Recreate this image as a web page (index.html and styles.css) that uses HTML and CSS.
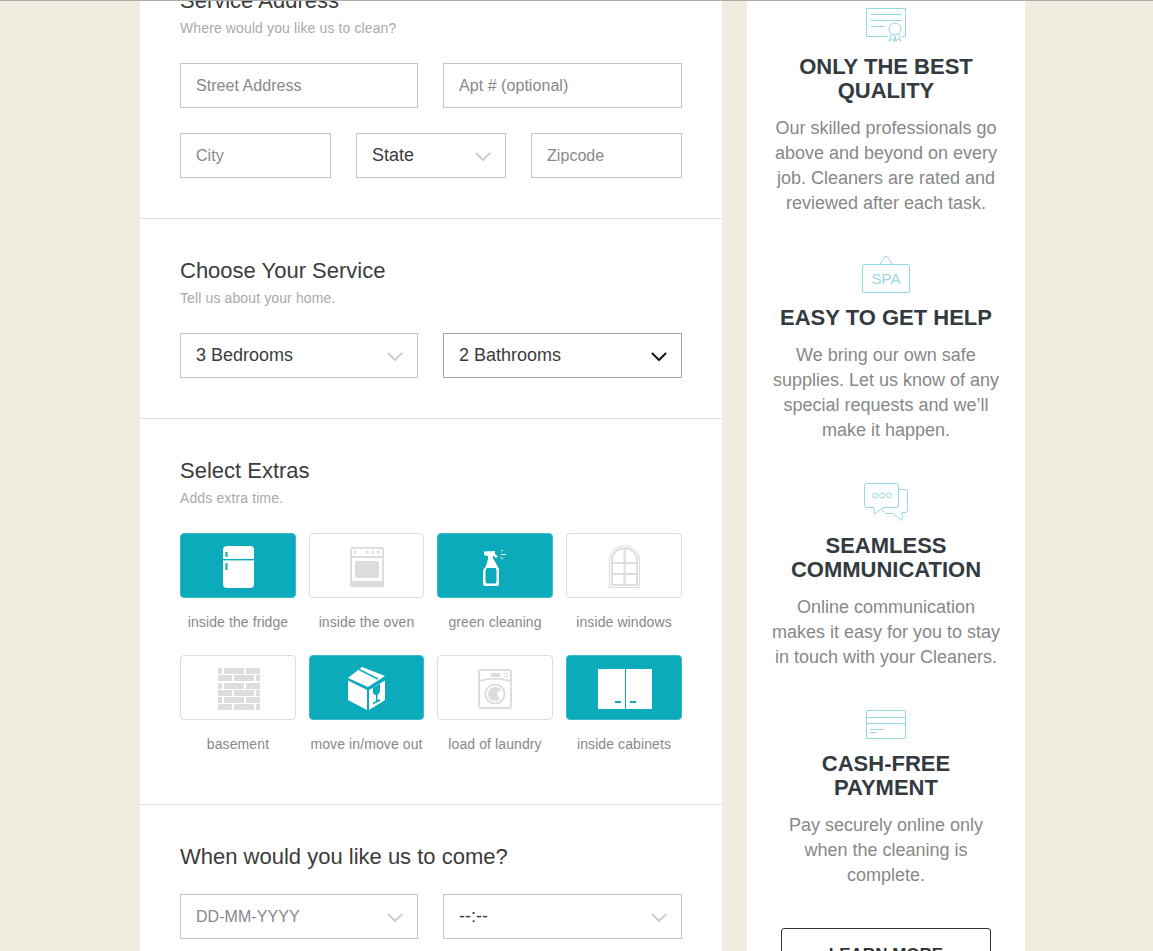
FILE: index.html
```html
<!DOCTYPE html>
<html lang="en">
<head>
    <meta charset="UTF-8">
    <meta name="viewport" content="width=device-width, initial-scale=1.0">
    <title>Book a Cleaning</title>
    <link rel="stylesheet" href="styles.css">
</head>
<body>
    <div class="top-line"></div>

    <div class="page">
        <main class="booking">
            <!-- address -->
            <section class="step">
                <h2>Service Address</h2>
                <p class="hint">Where would you like us to clean?</p>
                <div class="row two">
                    <input class="field" type="text" placeholder="Street Address">
                    <input class="field" type="text" placeholder="Apt # (optional)">
                </div>
                <div class="row three">
                    <input class="field" type="text" placeholder="City">
                    <div class="select">
                        <span>State</span>
                        <svg class="chevron" width="16" height="9" viewBox="0 0 18 10"><path d="M1 1l8 8 8-8"/></svg>
                    </div>
                    <input class="field" type="text" placeholder="Zipcode">
                </div>
            </section>

            <!-- service -->
            <section class="step">
                <h2>Choose Your Service</h2>
                <p class="hint">Tell us about your home.</p>
                <div class="row two">
                    <div class="select">
                        <span>3 Bedrooms</span>
                        <svg class="chevron" width="16" height="9" viewBox="0 0 18 10"><path d="M1 1l8 8 8-8"/></svg>
                    </div>
                    <div class="select open">
                        <span>2 Bathrooms</span>
                        <svg class="chevron" width="16" height="9" viewBox="0 0 18 10"><path d="M1 1l8 8 8-8"/></svg>
                    </div>
                </div>
            </section>

            <!-- extras -->
            <section class="step extras-step">
                <h2>Select Extras</h2>
                <p class="hint">Adds extra time.</p>
                <div class="extras">
                    <div class="extra">
                        <div class="tile on">
                            <svg width="32" height="42" viewBox="0 0 32 42">
                                <rect x="1" width="31" height="42" rx="4" fill="#fff"/>
                                <rect x="1" y="13" width="31" height="1.4" fill="#0cabbc"/>
                                <rect x="3.500" y="6" width="2" height="5" fill="#0cabbc"/>
                                <rect x="3.500" y="17" width="2" height="7" fill="#0cabbc"/>
                            </svg>
                        </div>
                        <span>inside the fridge</span>
                    </div>
                    <div class="extra">
                        <div class="tile">
                            <svg width="34" height="40" viewBox="0 0 34 40">
                                <rect x="1" y="1" width="32" height="38" rx="1.5" fill="none" stroke="#ddd" stroke-width="2"/>
                                <rect y="34" width="34" height="6" fill="#ddd"/>
                                <rect y="9" width="34" height="2" fill="#ddd"/>
                                <circle cx="5" cy="5" r="1.5" fill="#ddd"/>
                                <circle cx="17" cy="5" r="1.5" fill="#ddd"/>
                                <circle cx="23" cy="5" r="1.5" fill="#ddd"/>
                                <circle cx="28" cy="5" r="1.5" fill="#ddd"/>
                                <rect x="5" y="14" width="24" height="17" rx="2" fill="#ddd"/>
                            </svg>
                        </div>
                        <span>inside the oven</span>
                    </div>
                    <div class="extra">
                        <div class="tile on">
                            <svg width="24" height="38" viewBox="0 0 24 38">
                                <path d="M1 3.500L12 3V7.500L10 8V12H5V8H4.500L1 7z" fill="#fff"/>
                                <path d="M12 6L15 8.500L13 10L10.500 8z" fill="#fff"/>
                                <path d="M5 11H10.500L16 21V35.500Q16 38 14 38H2Q0 38 0 35.500V24Q0 21 3 18z" fill="#fff"/>
                                <path d="M4 20H12.500Q13.500 21 13.500 23V33Q13.500 35.500 12 35.500H4Q2.500 35.500 2.500 33V23Q2.500 21 4 20z" fill="#0cabbc"/>
                                <path d="M18 3L20 2M18 6.500H23M17.500 9.500L20 11" stroke="#fff" fill="none"/>
                            </svg>
                        </div>
                        <span>green cleaning</span>
                    </div>
                    <div class="extra">
                        <div class="tile">
                            <svg width="31" height="43" viewBox="0 0 31 43" fill="none" stroke="#ddd">
                                <path d="M0.500 42.500V14C0.500 6 8 0.500 15.500 0.500S30.500 6 30.500 14V42.500z"/>
                                <path d="M3 40V14C3 8 9 3 15.500 3S28 8 28 14V40z" stroke-width="2"/>
                                <path d="M15.500 3V40M3 18H28M3 29H28" stroke-width="2"/>
                            </svg>
                        </div>
                        <span>inside windows</span>
                    </div>
                    <div class="extra">
                        <div class="tile">
                            <svg width="44" height="42" viewBox="-2 0 44 42" fill="#ddd">
                                <path d="M0 0h4v6H0zM6 0h20v6H6zM28 0h14v6H28z"/>
                                <path d="M0 7h14v6H0zM16 7h20v6H16zM38 7h4v6h-4z"/>
                                <path d="M0 15h4v6H0zM6 15h20v6H6zM28 15h14v6H28z"/>
                                <path d="M0 22h14v6H0zM16 22h20v6H16zM38 22h4v6h-4z"/>
                                <path d="M0 29h4v6H0zM6 29h20v6H6zM28 29h14v6H28z"/>
                                <path d="M0 36h14v6H0zM16 36h20v6H16zM38 36h4v6h-4z"/>
                            </svg>
                        </div>
                        <span>basement</span>
                    </div>
                    <div class="extra">
                        <div class="tile on">
                            <svg width="38" height="43" viewBox="0 0 38 43">
                                <path d="M0 11L14 0L37 9L20 20z" fill="#fff"/>
                                <path d="M11 2.500L30 12" fill="none" stroke="#0cabbc" stroke-width="1.500"/>
                                <path d="M0 13.500L19 23V43L0 33z" fill="#fff"/>
                                <path d="M21 23L37 13.500V33L21 43z" fill="#fff"/>
                                <path d="M25 20.500L32 17V23C32 25.500 31 27 29.500 27.500V33L32 32V34L25 37.500V35.500L28 34V28C26 28 25 27 25 25z" fill="#0cabbc"/>
                            </svg>
                        </div>
                        <span>move in/move out</span>
                    </div>
                    <div class="extra">
                        <div class="tile">
                            <svg width="34" height="40" viewBox="0 0 34 40" fill="none" stroke="#ddd">
                                <rect x="1" y="1" width="32" height="38" rx="2" stroke-width="2"/>
                                <path d="M2 12c9-3 21-3 30 0" stroke-width="2"/>
                                <rect x="13" y="4" width="9" height="4" fill="#ddd" stroke="none"/>
                                <circle cx="28" cy="6" r="2"/>
                                <circle cx="17" cy="25" r="9.500" stroke-width="2"/>
                                <path d="M17 18a7 7 0 1 0 5 12l-2-3-1-3 3-2 1-1a7 7 0 0 0-6-3z" fill="#ddd" stroke="none"/>
                            </svg>
                        </div>
                        <span>load of laundry</span>
                    </div>
                    <div class="extra">
                        <div class="tile on">
                            <svg width="56" height="40" viewBox="-2 0 56 40">
                                <rect width="54" height="40" fill="#fff"/>
                                <rect x="27" width="1" height="40" fill="#0cabbc"/>
                                <rect x="17" y="32" width="6" height="2" fill="#0cabbc"/>
                                <rect x="32" y="32" width="6" height="2" fill="#0cabbc"/>
                            </svg>
                        </div>
                        <span>inside cabinets</span>
                    </div>
                </div>
            </section>

            <!-- date and time -->
            <section class="step">
                <h2>When would you like us to come?</h2>
                <div class="row two no-hint">
                    <div class="select muted">
                        <span>DD-MM-YYYY</span>
                        <svg class="chevron" width="16" height="9" viewBox="0 0 18 10"><path d="M1 1l8 8 8-8"/></svg>
                    </div>
                    <div class="select">
                        <span>--:--</span>
                        <svg class="chevron" width="16" height="9" viewBox="0 0 18 10"><path d="M1 1l8 8 8-8"/></svg>
                    </div>
                </div>
            </section>
        </main>

        <aside class="side">
            <div class="perk">
                <svg class="perk-icon" width="40" height="34" viewBox="0 0 40 34">
                    <path d="M22 28.500H0.500V0.500H39.500V28.500H36"/>
                    <path d="M5 6.500H36M5 12.500H36M5 18.500H19"/>
                    <circle cx="29" cy="21" r="6"/>
                    <path d="M25.500 26L23 33L26.500 31L28 33.500L29 28L30 33.500L31.500 31L35 33L32.500 26"/>
                </svg>
                <h3>ONLY THE BEST QUALITY</h3>
                <p>Our skilled professionals go above and beyond on every job. Cleaners are rated and reviewed after each task.</p>
            </div>
            <div class="perk">
                <svg class="perk-icon" width="48" height="37" viewBox="0 1 48 37">
                    <path d="M18 9L22.500 2Q24 0.500 25.500 2L30 9"/>
                    <rect x="0.500" y="9.500" width="47" height="28" rx="1.500"/>
                    <text class="spa" x="24" y="29" text-anchor="middle">SPA</text>
                </svg>
                <h3>EASY TO GET HELP</h3>
                <p>We bring our own safe supplies. Let us know of any special requests and we’ll make it happen.</p>
            </div>
            <div class="perk">
                <svg class="perk-icon" width="44" height="38" viewBox="0 0 44 38">
                    <path d="M3 0.500H32a2.500 2.500 0 0 1 2.500 2.500V22a2.500 2.500 0 0 1-2.500 2.500H20L10 31V24.500H3A2.500 2.500 0 0 1 0.500 22V3A2.500 2.500 0 0 1 3 0.500z"/>
                    <path d="M34.500 6.500H41a2.500 2.500 0 0 1 2.500 2.500V27a2.500 2.500 0 0 1-2.500 2.500H38V37.500L29 30.500H22L18 27"/>
                    <circle cx="11" cy="12.500" r="2.500"/>
                    <circle cx="18" cy="12.500" r="2.500"/>
                    <circle cx="25" cy="12.500" r="2.500"/>
                </svg>
                <h3>SEAMLESS COMMUNICATION</h3>
                <p>Online communication makes it easy for you to stay in touch with your Cleaners.</p>
            </div>
            <div class="perk">
                <svg class="perk-icon" width="40" height="29" viewBox="0 0 40 29">
                    <rect x="0.500" y="0.500" width="39" height="28" rx="0.500"/>
                    <path d="M0.500 7.500H39.500M0.500 13.500H39.500M4 19.500H18M4 22.500H10"/>
                </svg>
                <h3>CASH-FREE PAYMENT</h3>
                <p>Pay securely online only when the cleaning is complete.</p>
            </div>
            <button class="learn-more">LEARN MORE</button>
        </aside>
    </div>
</body>
</html>
```

FILE: styles.css
```css
html, body {
    height: 100%;
    overflow: hidden;
}
body {
    margin: 0;
    padding: 0;
    background-color: #f0ecdf;
    color: #3c3c3c;
    font-family: "Liberation Sans", Arial, sans-serif;
}
.top-line {
    position: absolute;
    top: 0;
    left: 0;
    right: 0;
    height: 1px;
    background-color: #aaa;
    z-index: 2;
}
.page {
    display: flex;
    align-items: flex-start;
    gap: 25px;
    margin-top: -51px;
    padding-left: 140px;
}
.booking {
    width: 582px;
    flex: none;
    background-color: #fff;
}
.step {
    padding: 40px 40px 40px;
    border-bottom: 1px solid #ddd;
}
.step:last-child {
    border-bottom: none;
}
.extras-step {
    padding-bottom: 51px;
}
.step h2 {
    margin: 0;
    font-size: 22px;
    font-weight: normal;
    line-height: 24px;
    color: #3c3c3c;
}
.hint {
    margin: 6px 0 26px;
    font-size: 14px;
    line-height: 18px;
    letter-spacing: 0.12px;
    color: #aaa;
}
.row {
    display: grid;
    gap: 25px;
    margin-bottom: 25px;
}
.row:last-child {
    margin-bottom: 0;
}
.no-hint {
    margin-top: 25px;
}
.two {
    grid-template-columns: 238px 239px;
}
.three {
    grid-template-columns: 151px 150px 151px;
}
.field, .select {
    box-sizing: border-box;
    width: 100%;
    height: 45px;
    padding: 0 15px;
    background-color: #fff;
    border: 1px solid #c4c4c4;
    border-radius: 0;
    font-family: inherit;
    font-size: 16px;
    letter-spacing: 0.05px;
}
.field::placeholder {
    color: #888;
    opacity: 1;
}
.select {
    position: relative;
    display: flex;
    align-items: center;
    font-size: 18px;
    letter-spacing: 0;
    color: #3c3c3c;
}
.select.muted {
    font-size: 16px;
    letter-spacing: 0.05px;
    color: #888;
}
.select.open {
    border-color: #a6a6a6;
}
.chevron {
    position: absolute;
    right: 14px;
    top: 18px;
    fill: none;
    stroke: #ccc;
    stroke-width: 2.2;
}
.open .chevron {
    stroke: #111;
}
.extras {
    display: grid;
    grid-template-columns: 116px 115px 116px 116px;
    column-gap: 13px;
    row-gap: 24px;
}
.extra {
    display: flex;
    flex-direction: column;
    align-items: center;
    font-size: 14px;
    line-height: 18px;
    letter-spacing: 0.1px;
    color: #888;
}
.tile {
    box-sizing: border-box;
    display: flex;
    align-items: center;
    justify-content: center;
    width: 100%;
    height: 65px;
    padding-top: 2px;
    margin-bottom: 15px;
    border: 1px solid #ddd;
    border-radius: 4px;
}
.tile.on {
    background-color: #0cabbc;
    border-color: #3bbac8;
}
.side {
    box-sizing: border-box;
    width: 278px;
    flex: none;
    padding: 59px 22px 0;
    background-color: #fff;
    text-align: center;
}
.perk {
    margin-bottom: 40px;
}
.perk-icon {
    display: block;
    margin: 0 auto 13px;
    fill: none;
    stroke: #96d8e0;
    stroke-width: 1;
}
.spa {
    fill: #96d8e0;
    stroke: none;
    font-size: 15px;
}
.perk h3 {
    margin: 0 0 13px;
    font-size: 22px;
    line-height: 24px;
    font-weight: bold;
    color: #333a40;
}
.perk p {
    margin: 0;
    font-size: 18px;
    line-height: 25px;
    color: #888;
}
.learn-more {
    display: block;
    width: 210px;
    height: 53px;
    margin: 0 auto;
    padding: 0;
    background: none;
    border: 1px solid #333;
    border-radius: 3px;
    font-family: inherit;
    font-size: 17px;
    font-weight: bold;
    color: #333;
}
```
